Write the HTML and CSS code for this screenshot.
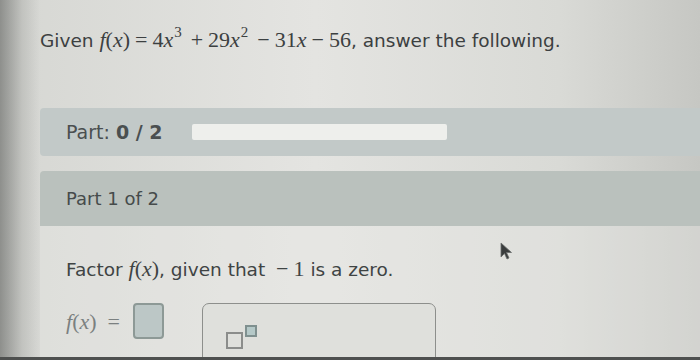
FILE: index.html
```html
<!DOCTYPE html>
<html lang="en">
<head>
    <meta charset="UTF-8">
    <title>Factor f(x)</title>
    <link rel="stylesheet" href="styles.css">
</head>
<body>
    <div class="page">
        <div class="question">
            Given <span class="math"><i>f</i>(<i>x</i>)<span class="op">=</span>4<i>x</i><sup>3</sup><span class="op">+</span>29<i>x</i><sup>2</sup><span class="op">&minus;</span>31<i>x</i><span class="op">&minus;</span>56</span>, answer the following.
        </div>

        <div class="progress-bar">
            <span class="progress-label">Part: <b>0 / 2</b></span>
            <div class="progress-track"></div>
        </div>

        <div class="part-header">Part 1 of 2</div>

        <div class="part-body">
            <div class="prompt">
                Factor <span class="math"><i>f</i>(<i>x</i>)</span>, given that <span class="math"><span class="op">&minus;</span>1</span> is a zero.
            </div>
            <div class="answer-row">
                <span class="math answer-label"><i>f</i>(<i>x</i>)<span class="op">=</span></span>
                <div class="answer-box"></div>
                <div class="keypad">
                    <div class="key-power">
                        <span class="base"></span>
                        <span class="exp"></span>
                    </div>
                </div>
            </div>
            <svg class="cursor" width="14" height="20" viewBox="0 0 14 20">
                <path d="M1 1 L1 15 L4.5 11.5 L7 17 L9 16 L6.5 10.5 L11.5 10.5 Z" fill="#3a3d3d" stroke="#6a6d6c" stroke-width="0.8"/>
            </svg>
        </div>
    </div>
    <div class="bezel"></div>
</body>
</html>
```

FILE: styles.css
```css
body {
    margin: 0;
    height: 360px;
    overflow: hidden;
    font-family: 'DejaVu Sans', Verdana, sans-serif;
    color: #3f4444;
    background: #dcddd9;
    position: relative;
}

.page {
    height: 360px;
    padding-left: 40px;
    box-sizing: border-box;
    background:
        linear-gradient(90deg, rgba(70, 72, 70, 0.5) 0px, rgba(70, 72, 70, 0.15) 22px, rgba(0, 0, 0, 0) 40px),
        linear-gradient(90deg, #d6d7d3 0%, #e4e4e1 45%, #d9dad6 80%, #c6c7c3 100%);
}

.math {
    font-family: 'Liberation Serif', serif;
    font-size: 22px;
}

.math .op {
    margin: 0 5px;
}

.math sup {
    font-size: 15px;
    vertical-align: 10px;
    line-height: 0;
    margin: 0 4px 0 1px;
}

.question {
    padding-top: 27px;
    font-size: 18.5px;
    height: 108px;
    box-sizing: border-box;
    color: #3c4041;
}

.progress-bar {
    height: 48px;
    background: #c2c9c8;
    border-radius: 4px 0 0 4px;
    display: flex;
    align-items: center;
    padding-left: 26px;
    gap: 29px;
}

.progress-label {
    font-size: 19px;
    color: #4a4f50;
}

.progress-label b {
    font-weight: 700;
}

.progress-track {
    width: 255px;
    height: 16px;
    background: #eeefec;
    border-radius: 2px;
}

.part-header {
    margin-top: 15px;
    height: 55px;
    background: #bac1bd;
    border-radius: 4px 0 0 0;
    display: flex;
    align-items: center;
    padding-left: 26px;
    font-size: 18px;
    color: #464b4b;
}

.part-body {
    position: relative;
    padding: 30px 0 0 26px;
    background: rgba(235, 235, 231, 0.35);
    height: 160px;
}

.prompt {
    font-size: 18.5px;
    color: #3f4444;
}

.answer-row {
    margin-top: 21px;
    display: flex;
    align-items: flex-start;
}

.answer-label {
    margin-top: 6px;
    color: #7b8080;
}

.answer-label .op {
    margin: 0 0 0 11px;
}

.answer-box {
    width: 31px;
    height: 36px;
    margin-left: 13px;
    background: #bcc7c6;
    border: 2px solid #8d9996;
    border-radius: 4px;
    box-sizing: border-box;
}

.keypad {
    margin-left: 38px;
    width: 234px;
    height: 70px;
    border: 1px solid #8d8f8c;
    border-radius: 7px;
    background: #dfe0dc;
    box-sizing: border-box;
    padding: 20px 0 0 23px;
}

.key-power {
    position: relative;
    width: 36px;
    height: 28px;
}

.key-power .base {
    position: absolute;
    left: 0;
    top: 8px;
    width: 17px;
    height: 17px;
    border: 2px solid #8b8d8b;
    box-sizing: border-box;
}

.key-power .exp {
    position: absolute;
    left: 19px;
    top: 1px;
    width: 12px;
    height: 12px;
    background: #b5c9c8;
    border: 2px solid #7f908f;
    box-sizing: border-box;
}

.cursor {
    position: absolute;
    left: 460px;
    top: 16px;
}

.bezel {
    position: absolute;
    left: 0;
    right: 0;
    bottom: 0;
    height: 3px;
    background: #4e504f;
}
```
